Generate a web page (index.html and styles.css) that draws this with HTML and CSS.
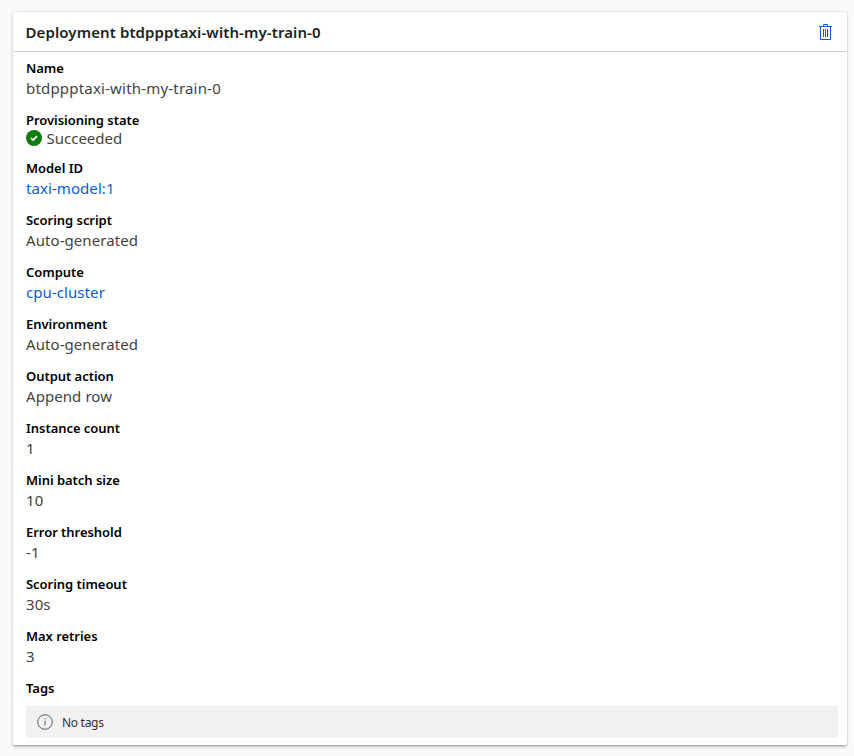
FILE: index.html
```
<!DOCTYPE html>
<html lang="en">
<head>
<meta charset="utf-8">
<title>Deployment btdppptaxi-with-my-train-0</title>
<link rel="stylesheet" href="styles.css">
</head>
<body>
<main class="card">
  <header class="card-header">
    <h1 class="title">Deployment btdppptaxi-with-my-train-0</h1>
    <button class="delete" aria-label="Delete">
      <svg width="13" height="16" viewBox="0 0 13 16" fill="none" stroke="#0b5cd5">
        <path d="M0 2.500H13M4.500 2.500V.5H8.500V2.500M1.500 2.500V15.500H11.500V2.500"/>
        <path d="M4.500 5V13M6.500 5V13M8.500 5V13"/>
      </svg>
    </button>
  </header>
  <dl class="details">
    <div class="field"><dt>Name</dt><dd class="name">btdppptaxi-with-my-train-0</dd></div>
    <div class="field"><dt>Provisioning state</dt><dd class="status">
      <svg width="16" height="16" viewBox="0 0 16 16"><circle cx="8" cy="8" r="8" fill="#107c10"/><path d="M5 8L7.100 10L11 6.200" fill="none" stroke="#fff" stroke-width="1.700"/></svg><span>Succeeded</span></dd></div>
    <div class="field"><dt>Model ID</dt><dd><a class="link">taxi-model:1</a></dd></div>
    <div class="field"><dt>Scoring script</dt><dd>Auto-generated</dd></div>
    <div class="field"><dt>Compute</dt><dd><a class="link">cpu-cluster</a></dd></div>
    <div class="field"><dt>Environment</dt><dd>Auto-generated</dd></div>
    <div class="field"><dt>Output action</dt><dd>Append row</dd></div>
    <div class="field"><dt>Instance count</dt><dd>1</dd></div>
    <div class="field"><dt>Mini batch size</dt><dd>10</dd></div>
    <div class="field"><dt>Error threshold</dt><dd>-1</dd></div>
    <div class="field"><dt>Scoring timeout</dt><dd>30s</dd></div>
    <div class="field"><dt>Max retries</dt><dd>3</dd></div>
    <div class="field"><dt>Tags</dt><dd class="notice">
      <svg width="16" height="16" viewBox="0 0 16 16" fill="none" stroke="#605e5c"><circle cx="8" cy="8" r="7.300"/><path d="M8 6.500V11.500M8 4.300V5.400"/></svg><span class="notice-text">No tags</span></dd></div>
  </dl>
</main>
</body>
</html>
```
FILE: styles.css
```
* { box-sizing: border-box; }
body {
  margin: 0;
  padding: 12px 7px 11px 13px;
  background: #fafafa;
  font-family: "Noto Sans", "Open Sans", sans-serif;
  color: #444341;
}
.card {
  height: 733px;
  background: #fff;
  border-radius: 2px;
  box-shadow: 0 1.6px 3.6px rgba(0, 0, 0, .22), 0 .6px 1.2px rgba(0, 0, 0, .2);
}
.card-header {
  display: flex;
  align-items: center;
  justify-content: space-between;
  height: 40px;
  margin: 0 1px;
  padding: 0 14px 0 11.5px;
  border-bottom: 1px solid #d2d0ce;
}
.title {
  margin: 0;
  font-size: 15px;
  line-height: 22px;
  font-weight: 600;
  letter-spacing: .1px;
  color: #201f1e;
}
.delete {
  display: flex;
  padding: 1px 0 0;
  border: 0;
  background: none;
}
.details {
  display: flex;
  flex-direction: column;
  gap: 12px;
  margin: 0;
  padding: 6px 9px 0 13px;
}
dt {
  font-size: 13px;
  line-height: 20px;
  font-weight: 600;
  letter-spacing: -.04px;
  color: #000;
}
dd {
  margin: 0;
  font-size: 15px;
  line-height: 20px;
  letter-spacing: .07px;
}
.name { letter-spacing: .19px; }
.link { color: #0b5cd5; }
.status {
  display: flex;
  align-items: center;
  gap: 4.500px;
  height: 16px;
  letter-spacing: 0;
}
.notice {
  display: flex;
  align-items: center;
  gap: 9px;
  height: 32px;
  margin-top: 8px;
  padding-left: 11px;
  background: #f3f2f1;
  font-size: 12px;
  letter-spacing: -.3px;
  color: #323130;
}
.notice-text { padding-top: 1px; }
```
